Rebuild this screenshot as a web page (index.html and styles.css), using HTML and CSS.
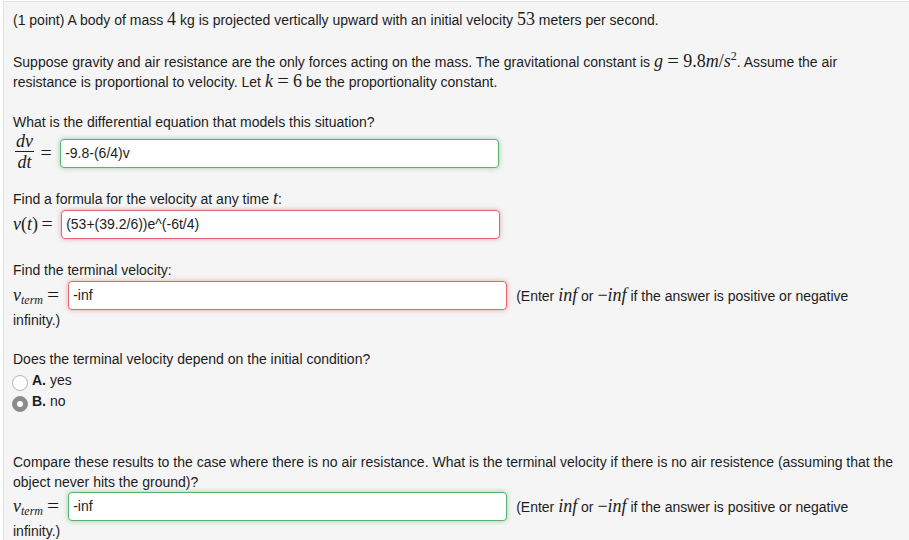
FILE: index.html
```html
<!DOCTYPE html>
<html lang="en">
<head>
    <meta charset="UTF-8">
    <title>Problem 4</title>
    <link rel="stylesheet" href="styles.css">
</head>
<body>
    <div class="problem">
        <div class="line">(1 point) A body of mass <span class="m">4</span> kg is projected vertically upward with an initial velocity <span class="m">53</span> meters per second.</div>

        <div class="para intro">
            <div class="line">Suppose gravity and air resistance are the only forces acting on the mass. The gravitational constant is <span class="m"><i>g</i><span class="rel">=</span>9.8<i>m</i>/<i>s</i><sup>2</sup></span>. Assume the air</div>
            <div class="line tall">resistance is proportional to velocity. Let <span class="m"><i>k</i><span class="rel">=</span>6</span> be the proportionality constant.</div>
        </div>

        <!-- differential equation -->
        <div class="para tight">
            <div class="line">What is the differential equation that models this situation?</div>
            <div class="answer-row frac-row">
                <span class="frac"><span class="num"><i>dv</i></span><span class="den"><i>dt</i></span></span>
                <span class="m eq frac-eq">=</span>
                <input class="ans correct" type="text" value="-9.8-(6/4)v">
            </div>
        </div>

        <div class="para">
            <div class="line">Find a formula for the velocity at any time <span class="m"><i>t</i></span>:</div>
            <div class="answer-row">
                <span class="m"><i>v</i>(<i>t</i>)</span>
                <span class="m eq">=</span>
                <input class="ans wrong" type="text" value="(53+(39.2/6))e^(-6t/4)">
            </div>
        </div>

        <div class="para">
            <div class="line">Find the terminal velocity:</div>
            <div class="answer-row">
                <span class="m"><i>v</i><sub><i>term</i></sub></span>
                <span class="m eq wide-eq">=</span>
                <input class="ans wrong" type="text" value="-inf">
                <span class="hint">(Enter <span class="m"><i>inf</i></span> or <span class="m">&minus;<i>inf</i></span> if the answer is positive or negative</span>
            </div>
            <div class="line">infinity.)</div>
        </div>

        <div class="para choices">
            <div class="line">Does the terminal velocity depend on the initial condition?</div>
            <div class="choice"><span class="radio"></span><b>A.</b>&nbsp;yes</div>
            <div class="choice"><span class="radio checked"></span><b>B.</b>&nbsp;no</div>
        </div>

        <div class="para last">
            <div class="line">Compare these results to the case where there is no air resistance. What is the terminal velocity if there is no air resistence (assuming that the</div>
            <div class="line">object never hits the ground)?</div>
            <div class="answer-row">
                <span class="m"><i>v</i><sub><i>term</i></sub></span>
                <span class="m eq wide-eq">=</span>
                <input class="ans correct" type="text" value="-inf">
                <span class="hint">(Enter <span class="m"><i>inf</i></span> or <span class="m">&minus;<i>inf</i></span> if the answer is positive or negative</span>
            </div>
            <div class="line end">infinity.)</div>
        </div>
    </div>
</body>
</html>
```

FILE: styles.css
```css
body {
    margin: 0;
    padding: 0;
    background: #ffffff;
    overflow: hidden;
    font-family: "Liberation Sans", Arial, sans-serif;
    font-size: 14px;
    color: #1c1c1c;
}

/* problem well */
.problem {
    margin: 1px 0 0 3px;
    width: 930px;
    padding: 8px 9px 40px 9px;
    background: #f5f5f5;
    border: 1px solid #e3e3e3;
    border-right: none;
}

.line {
    height: 20px;
    line-height: 20px;
    white-space: nowrap;
}

.line.tall {
    height: 21px;
    line-height: 21px;
}

.line.end {
    margin-top: 0;
}

.para {
    margin-top: 21px;
}

.para.intro {
    margin-top: 22px;
}

.para.tight {
    margin-top: 19px;
}

.para.choices {
    margin-top: 19px;
}

.para.last {
    margin-top: 41px;
}

/* math bits, MathJax look */
.m {
    font-family: "Liberation Serif", "Times New Roman", serif;
    font-size: 18px;
    line-height: 0;
}

.m i {
    font-style: italic;
}

.m .rel {
    margin: 0 5px;
    display: inline-block;
    transform: scaleX(1.15);
}

.m sup {
    font-size: 12px;
    vertical-align: 7px;
    line-height: 0;
}

.m sub {
    font-size: 12px;
    vertical-align: -3px;
    line-height: 0;
}

.answer-row {
    display: flex;
    align-items: center;
    height: 30px;
    white-space: nowrap;
}

.answer-row .m {
    line-height: normal;
}

.answer-row.frac-row {
    margin-top: 6px;
}

.last .answer-row {
    margin-top: -1px;
}

.frac {
    display: inline-flex;
    flex-direction: column;
    align-items: center;
    font-family: "Liberation Serif", "Times New Roman", serif;
    font-size: 18px;
    margin-left: 2px;
    margin-top: -3px;
}

.frac .num {
    border-bottom: 1px solid #1c1c1c;
    padding: 0 1px;
    line-height: 19px;
}

.frac .den {
    line-height: 20px;
}

.eq {
    display: inline-block;
    margin: 0 9px 0 4px;
    transform: scaleX(1.1);
}

.eq.frac-eq {
    margin: 0 9px 0 7px;
}

.eq.wide-eq {
    margin: 0 10px 0 5px;
    transform: scaleX(1.2);
}

.ans {
    box-sizing: border-box;
    width: 439px;
    height: 29px;
    padding: 0 4px;
    font-family: "Liberation Sans", Arial, sans-serif;
    font-size: 14px;
    color: #1c1c1c;
    background: #ffffff;
    border: 1px solid #ccc;
    border-radius: 4px;
    outline: none;
}

.ans.correct {
    border-color: #59b46f;
    box-shadow: 0 0 5px rgba(81, 170, 100, 0.55);
}

.ans.wrong {
    border-color: #e0676b;
    box-shadow: 0 0 5px rgba(222, 90, 95, 0.5);
}

.hint {
    margin-left: 9px;
}

/* radio choices */
.choice {
    display: flex;
    align-items: center;
    height: 21px;
    margin-left: -1px;
}

.choice b {
    margin-left: 2px;
}

.radio {
    box-sizing: border-box;
    display: inline-block;
    width: 16px;
    height: 16px;
    border-radius: 50%;
    background: #ffffff;
    border: 1px solid #b4b4b4;
    margin-top: 6px;
    margin-right: 2px;
}

.radio.checked {
    background: #8c8c8c;
    border-color: #8c8c8c;
    position: relative;
}

.radio.checked::after {
    content: '';
    position: absolute;
    left: 4px;
    top: 4px;
    width: 6px;
    height: 6px;
    border-radius: 50%;
    background: #ffffff;
}
```
